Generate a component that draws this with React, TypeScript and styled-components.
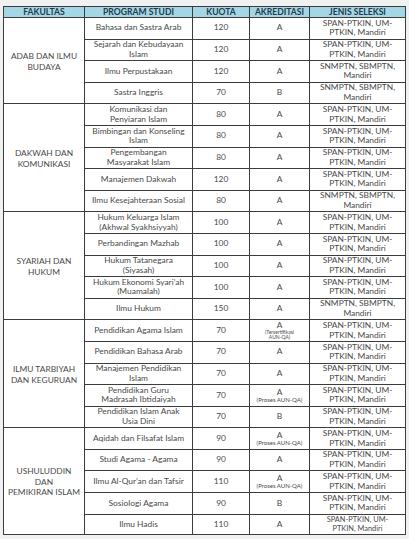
import React from "react";
import styled, { createGlobalStyle } from "styled-components";

const Global = createGlobalStyle`
  html, body { margin: 0; padding: 0; background: #f1f1f1; }
  body { font-family: "Lato", "Open Sans", sans-serif; }
`;

const Page = styled.div`
  width: 409px;
  height: 539px;
  padding: 6px 0 0 3px;
  box-sizing: border-box;
`;

const Table = styled.table`
  width: 402px;
  table-layout: fixed;
  border-collapse: collapse;
  background: #ffffff;
  border: 1px solid #3c3c3c;
`;

const Th = styled.th`
  background: #a3d7e5;
  color: #27394a;
  font-weight: 700;
  font-size: 8.6px;
  height: 10px;
  padding: 0;
  line-height: 10px;
  border: 1px solid #3c3c3c;
  text-align: center;
  white-space: nowrap;
`;

const Row = styled.tr<{ $h: number }>`
  height: ${(p) => p.$h}px;
`;

const Td = styled.td<{ $size?: number }>`
  border: 1px solid #3c3c3c;
  color: #4a4a4a;
  font-size: ${(p) => p.$size ?? 8.4}px;
  line-height: 9.7px;
  text-align: center;
  vertical-align: middle;
  padding: 0;
  white-space: nowrap;
`;

const FacCell = styled(Td)`
  line-height: 10.5px;
  padding-top: 2px;
`;

const Note = styled.div<{ $size: number }>`
  font-size: ${(p) => p.$size}px;
  line-height: ${(p) => p.$size + 0.5}px;
`;

const Main = styled.div`
  line-height: 9px;
`;

type Prog = { p: string[]; k: number; a: string; note?: string[]; s: "SPAN" | "SNM"; small?: boolean };
type Group = { name: string[]; rows: Prog[] };

const groups: Group[] = [
  {
    name: ["ADAB DAN ILMU", "BUDAYA"],
    rows: [
      { p: ["Bahasa dan Sastra Arab"], k: 120, a: "A", s: "SPAN" },
      { p: ["Sejarah dan Kebudayaan", "Islam"], k: 120, a: "A", s: "SPAN" },
      { p: ["Ilmu Perpustakaan"], k: 120, a: "A", s: "SNM" },
      { p: ["Sastra Inggris"], k: 70, a: "B", s: "SNM" },
    ],
  },
  {
    name: ["DAKWAH DAN", "KOMUNIKASI"],
    rows: [
      { p: ["Komunikasi dan", "Penyiaran Islam"], k: 80, a: "A", s: "SPAN" },
      { p: ["Bimbingan dan Konseling", "Islam"], k: 80, a: "A", s: "SPAN" },
      { p: ["Pengembangan", "Masyarakat Islam"], k: 80, a: "A", s: "SPAN" },
      { p: ["Manajemen Dakwah"], k: 120, a: "A", s: "SPAN" },
      { p: ["Ilmu Kesejahteraan Sosial"], k: 80, a: "A", s: "SNM" },
    ],
  },
  {
    name: ["SYARIAH DAN", "HUKUM"],
    rows: [
      { p: ["Hukum Keluarga Islam", "(Akhwal Syakhsiyyah)"], k: 100, a: "A", s: "SPAN" },
      { p: ["Perbandingan Mazhab"], k: 100, a: "A", s: "SPAN" },
      { p: ["Hukum Tatanegara", "(Siyasah)"], k: 100, a: "A", s: "SPAN" },
      { p: ["Hukum Ekonomi Syari’ah", "(Muamalah)"], k: 100, a: "A", s: "SPAN" },
      { p: ["Ilmu Hukum"], k: 150, a: "A", s: "SNM" },
    ],
  },
  {
    name: ["ILMU TARBIYAH", "DAN KEGURUAN"],
    rows: [
      { p: ["Pendidikan Agama Islam"], k: 70, a: "A", note: ["(Tersertifikasi", "AUN-QA)"], s: "SPAN" },
      { p: ["Pendidikan Bahasa Arab"], k: 70, a: "A", s: "SPAN" },
      { p: ["Manajemen Pendidikan", "Islam"], k: 70, a: "A", s: "SPAN" },
      { p: ["Pendidikan Guru", "Madrasah Ibtidaiyah"], k: 70, a: "A", note: ["(Proses AUN-QA)"], s: "SPAN" },
      { p: ["Pendidikan Islam Anak", "Usia Dini"], k: 70, a: "B", s: "SPAN" },
    ],
  },
  {
    name: ["USHULUDDIN", "DAN", "PEMIKIRAN ISLAM"],
    rows: [
      { p: ["Aqidah dan Filsafat Islam"], k: 90, a: "A", note: ["(Proses AUN-QA)"], s: "SPAN" },
      { p: ["Studi Agama - Agama"], k: 90, a: "A", s: "SPAN" },
      { p: ["Ilmu Al-Qur’an dan Tafsir"], k: 110, a: "A", note: ["(Proses AUN-QA)"], s: "SPAN" },
      { p: ["Sosiologi Agama"], k: 90, a: "B", s: "SPAN" },
      { p: ["Ilmu Hadis"], k: 110, a: "A", s: "SPAN", small: true },
    ],
  },
];

const seleksi = {
  SPAN: ["SPAN-PTKIN, UM-", "PTKIN, Mandiri"],
  SNM: ["SNMPTN, SBMPTN,", "Mandiri"],
};

const Lines = ({ lines }: { lines: string[] }) => (
  <>
    {lines.map((l, i) => (
      <div key={i}>{l}</div>
    ))}
  </>
);

export default function App() {
  return (
    <>
      <Global />
      <Page>
        <Table>
          <colgroup>
            <col style={{ width: 81 }} />
            <col style={{ width: 108 }} />
            <col style={{ width: 57 }} />
            <col style={{ width: 60 }} />
            <col style={{ width: 96 }} />
          </colgroup>
          <thead>
            <tr>
              <Th>FAKULTAS</Th>
              <Th>PROGRAM STUDI</Th>
              <Th>KUOTA</Th>
              <Th>AKREDITASI</Th>
              <Th>JENIS SELEKSI</Th>
            </tr>
          </thead>
          <tbody>
            {groups.map((g, gi) =>
              g.rows.map((r, ri) => {
                const last = gi === groups.length - 1 && ri === g.rows.length - 1;
                return (
                  <Row key={`${gi}-${ri}`} $h={last ? 15 : 21.6}>
                    {ri === 0 && (
                      <FacCell rowSpan={g.rows.length}>
                        <Lines lines={g.name} />
                      </FacCell>
                    )}
                    <Td>
                      <Lines lines={r.p} />
                    </Td>
                    <Td>{r.k}</Td>
                    <Td>
                      {r.note ? (
                        <>
                          <Main>{r.a}</Main>
                          <Note $size={r.note.length > 1 ? 5 : 6}>
                            <Lines lines={r.note} />
                          </Note>
                        </>
                      ) : (
                        r.a
                      )}
                    </Td>
                    <Td $size={r.small ? 7.4 : 8.4}>
                      <Lines lines={seleksi[r.s]} />
                    </Td>
                  </Row>
                );
              })
            )}
          </tbody>
        </Table>
      </Page>
    </>
  );
}
